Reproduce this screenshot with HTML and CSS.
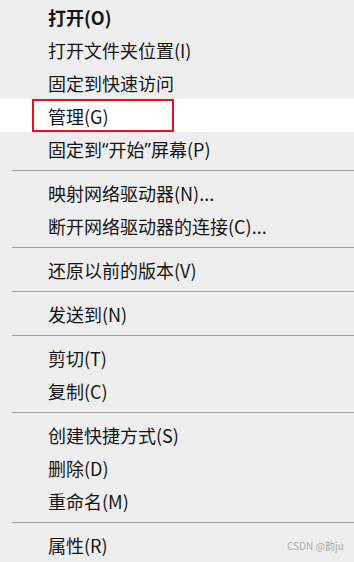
FILE: index.html
```html
<!DOCTYPE html>
<html lang="zh-CN">
<head>
<meta charset="utf-8">
<link rel="stylesheet" href="styles.css">
</head>
<body>
<div class="menu">
  <div class="item bold">打开(O)</div>
  <div class="item">打开文件夹位置(I)</div>
  <div class="item">固定到快速访问</div>
  <div class="item hot"><span class="mark"></span>管理(G)</div>
  <div class="item">固定到<span class="q">“</span>开始<span class="q">”</span>屏幕(P)</div>
  <div class="sep"></div>
  <div class="item">映射网络驱动器(N)...</div>
  <div class="item">断开网络驱动器的连接(C)...</div>
  <div class="sep"></div>
  <div class="item">还原以前的版本(V)</div>
  <div class="sep"></div>
  <div class="item">发送到(N)</div>
  <div class="sep"></div>
  <div class="item">剪切(T)</div>
  <div class="item">复制(C)</div>
  <div class="sep"></div>
  <div class="item">创建快捷方式(S)</div>
  <div class="item">删除(D)</div>
  <div class="item">重命名(M)</div>
  <div class="sep"></div>
  <div class="item last">属性(R)<span class="wm">CSDN @韵ju</span></div>
</div>
</body>
</html>
```
FILE: styles.css
```css
html, body {
  margin: 0;
  padding: 0;
  background: #eeeeee;
}
.menu {
  width: 354px;
  height: 562px;
  overflow: hidden;
  font-family: "Noto Sans CJK SC", "Noto Sans", sans-serif;
  font-size: 18px;
  color: #151515;
}
.item {
  position: relative;
  height: 33px;
  display: flex;
  align-items: center;
  padding-left: 48px;
  white-space: nowrap;
}
.q {
  font-family: "Noto Sans", sans-serif;
}
.bold {
  font-weight: bold;
}
.hot {
  background: #ffffff;
}
.mark {
  position: absolute;
  left: 32px;
  top: 0;
  width: 138px;
  height: 29px;
  border: 2px solid #e5121c;
}
.sep {
  height: 11px;
  display: flex;
  flex-direction: column;
  justify-content: center;
  padding-left: 12px;
}
.sep::after {
  content: "";
  display: block;
  height: 1px;
  background: #a0a0a0;
}
.wm {
  position: absolute;
  left: 287px;
  top: 10px;
  font-size: 10px;
  color: #aaaaaa;
  font-family: "Noto Sans CJK SC", "Noto Sans", sans-serif;
}
```
